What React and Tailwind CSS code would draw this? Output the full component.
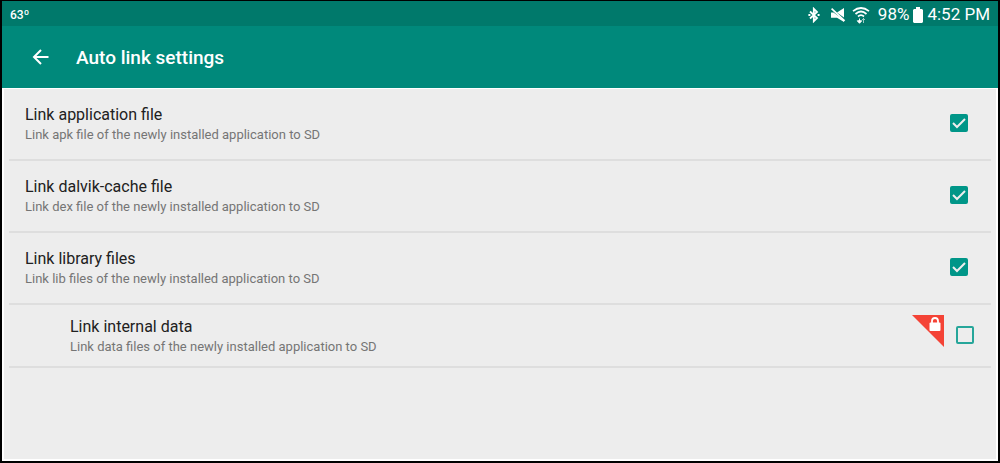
import React from "react";

const items = [
  { id: "apk", title: "Link application file", note: "Link apk file of the newly installed application to SD", on: true },
  { id: "dex", title: "Link dalvik-cache file", note: "Link dex file of the newly installed application to SD", on: true },
  { id: "lib", title: "Link library files", note: "Link lib files of the newly installed application to SD", on: true },
  { id: "data", title: "Link internal data", note: "Link data files of the newly installed application to SD", on: false, locked: true },
];

function Bluetooth() {
  return (
    <svg className="h-4 w-3" viewBox="0 0 12 16" fill="none" stroke="currentColor" strokeWidth="1.8" aria-hidden="true">
      <path d="M2 4.5l7 6.5-3.2 3.2V1.8L9 5l-7 6.5" />
      <path d="M.4 8h2M9.6 8h2" />
    </svg>
  );
}

function Muted() {
  return (
    <svg className="h-4 w-4" viewBox="0 0 16 16" fill="currentColor" aria-hidden="true">
      <path d="M7 5.500L14 1v9.500zM1 5.500h2.500L14 13v2l-7-4.300H1z" />
      <path d="M1 2.200L2.200 1 15.200 13.200 14 14.600z" />
    </svg>
  );
}

function Wifi() {
  return (
    <svg className="h-[18px] w-[18px]" viewBox="0 0 18 18" fill="none" stroke="currentColor" strokeWidth="1.700" aria-hidden="true">
      <path d="M1 5.200Q9-1.200 17 5.200M3.500 8Q9 3 14.500 8M6 10.500Q9 7.800 12 10.500" />
      <path d="M7.500 12.500v4.500M5.300 14.800h4.400L7.500 17.300z" fill="currentColor" strokeWidth="1" />
      <path d="M11.500 17v-4.500M10 14l1.500-1.500L13 14" strokeWidth="1" opacity=".6" />
    </svg>
  );
}

function Battery() {
  return (
    <svg className="h-4 w-2.5" viewBox="0 0 10 16" fill="currentColor" aria-hidden="true">
      <path d="M3 0h4v2h2l1 1v12l-1 1H1l-1-1V3l1-1h2z" />
    </svg>
  );
}

function LockBadge() {
  return (
    <svg className="h-8 w-8" viewBox="0 0 32 32" role="img" aria-label="Locked">
      <path d="M0 0h32v32z" fill="#f44336" />
      <rect x="17.500" y="7.500" width="11" height="8.500" rx="1" fill="#fff" />
      <path d="M20 8V6a3 3 0 0 1 6 0v2" fill="none" stroke="#fff" strokeWidth="1.800" />
    </svg>
  );
}

function Row({ item }) {
  return (
    <li className={item.locked ? "flex h-[63px] items-center border-b-2 border-[#dedede] pr-[17px] pb-0.5 pl-[61px]" : "flex h-[72px] items-center border-b-2 border-[#dedede] pr-[23px] pb-0.5 pl-4"}>
      <label htmlFor={item.id} className="flex-1 pt-1">
        <span className="block text-[16px] leading-5 text-[#212121]">{item.title}</span>
        <span className="block text-[13px] leading-5 text-[#757575]">{item.note}</span>
      </label>
      {item.locked && <span className="mr-3 pb-2"><LockBadge /></span>}
      <span className="grid h-[18px] w-[18px]">
        <input
          id={item.id}
          type="checkbox"
          defaultChecked={item.on}
          className="peer col-start-1 row-start-1 h-[18px] w-[18px] appearance-none rounded-xs border-2 border-[#26a69a] checked:border-[#009688] checked:bg-[#009688]"
        />
        <svg className="pointer-events-none invisible col-start-1 row-start-1 peer-checked:visible" viewBox="0 0 18 18" fill="none" stroke="#eee" strokeWidth="2" aria-hidden="true">
          <path d="M3 9l4 4 8-8" />
        </svg>
      </span>
    </li>
  );
}

export default function App() {
  return (
    <div className="flex min-h-screen flex-col border-2 border-t-1 border-black bg-[#00897b] font-['Roboto',sans-serif]">
      <div className="flex h-[25px] items-center justify-between bg-[#00796b] pt-0.5 pr-2 pl-2 text-white">
        <span className="text-[12px] font-medium">63º</span>
        <div className="flex items-center text-[17px]">
          <span className="mr-2.5"><Bluetooth /></span>
          <span className="mr-1.5"><Muted /></span>
          <span className="mr-2"><Wifi /></span>
          <span className="mr-1">98%</span>
          <span className="mr-1"><Battery /></span>
          <span>4:52 PM</span>
        </div>
      </div>
      <header className="flex h-[62px] items-center gap-[26px] pl-[30px] text-white">
        <button type="button" aria-label="Back">
          <svg className="h-[18px] w-[18px]" viewBox="0 0 18 18" fill="none" stroke="currentColor" strokeWidth="2" aria-hidden="true">
            <path d="M16.500 9H2.500M9 2L2 9l7 7" />
          </svg>
        </button>
        <h1 className="pt-0.5 text-[19px] font-medium">Auto link settings</h1>
      </header>
      <main className="flex-1 border-2 border-t-1 border-white bg-[#ededed] px-[5px]">
        <ul>
          {items.map((item) => <Row key={item.id} item={item} />)}
        </ul>
      </main>
    </div>
  );
}
